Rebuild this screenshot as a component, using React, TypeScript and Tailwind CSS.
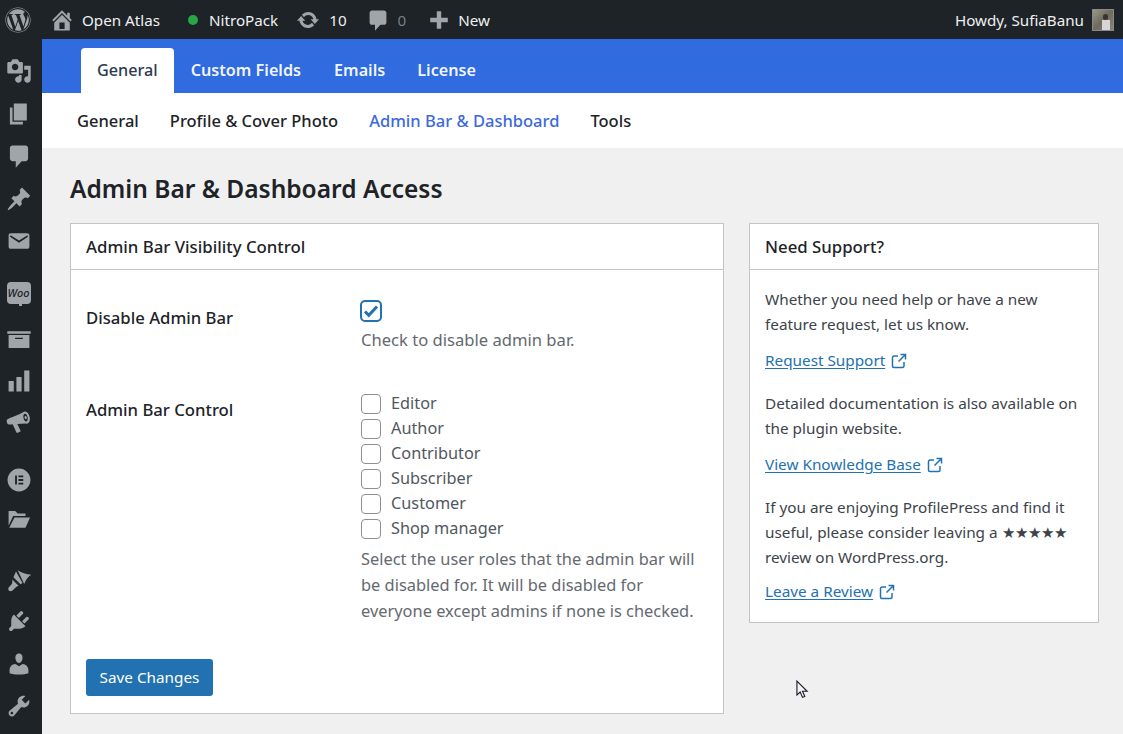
import React from 'react';
import { FaWordpress } from 'react-icons/fa';

const D: React.FC<{ d: string; className?: string }> = ({ d, className }) => (
  <svg viewBox="0 0 20 20" className={className} fill="currentColor" fillRule="evenodd">
    <path d={d} />
  </svg>
);

const paths = {
  home: 'M16 8.5l1.53 1.53-1.06 1.06L10 4.62l-6.47 6.47-1.06-1.06L10 2.5l4 4v-2h2v4zm-6-2.46l6 5.99V18H4v-5.97zM12 17v-5H8v5h4z',
  update: 'M10.2 3.28c3.53 0 6.43 2.61 6.92 6h2.08l-3.5 4-3.5-4h2.32c-.45-1.97-2.21-3.45-4.32-3.45-1.45 0-2.73.71-3.54 1.78L4.95 5.66C6.23 4.2 8.11 3.28 10.2 3.28zm-.4 13.44c-3.52 0-6.43-2.61-6.92-6H.8l3.5-4c1.17 1.33 2.33 2.67 3.5 4H5.48c.45 1.97 2.21 3.45 4.32 3.45 1.45 0 2.73-.71 3.54-1.78l1.71 1.95c-1.28 1.46-3.15 2.38-5.25 2.38z',
  comment: 'M5 2h10c1.1 0 2 .9 2 2v8c0 1.1-.9 2-2 2h-3l-4.5 5v-5H5c-1.1 0-2-.9-2-2V4c0-1.1.9-2 2-2z',
  plus: 'M18 8v4h-6v6H8v-6H2V8h6V2h4v6h6z',
  media: 'M13 11V4c0-.55-.45-1-1-1h-1.67L9 1H5L3.67 3H2c-.55 0-1 .45-1 1v7c0 .55.45 1 1 1h10c.55 0 1-.45 1-1zM7 4.5c1.38 0 2.5 1.12 2.5 2.5S8.38 9.5 7 9.5 4.5 8.38 4.5 7 5.62 4.5 7 4.5zM14 6h5v10.5c0 1.38-1.12 2.5-2.5 2.5S14 17.88 14 16.5s1.12-2.5 2.5-2.5c.17 0 .34.02.5.05V9h-3V6zm-4 8.05V13h2v3.5c0 1.38-1.12 2.5-2.5 2.5S7 17.88 7 16.5 8.12 14 9.5 14c.17 0 .34.02.5.05z',
  page: 'M6 15V2h10v13H6zm-1 1h8v2H3V5h2v11z',
  pin: 'M10.44 3.02l1.82-1.82 6.36 6.35-1.83 1.82c-1.05-.68-2.48-.57-3.41.36l-.75.75c-.92.93-1.04 2.35-.35 3.41l-1.83 1.82-2.41-2.41-2.8 2.79c-.42.42-3.38 2.71-3.8 2.29s1.86-3.39 2.28-3.81l2.79-2.79L4.1 9.36l1.83-1.82c1.05.69 2.48.57 3.4-.36l.75-.75c.93-.92 1.05-2.35.36-3.41z',
  mail: 'M3.87 4h12.25C17.37 4 18 4.59 18 5.79v8.42c0 1.19-.63 1.79-1.88 1.79H3.87C2.62 16 2 15.4 2 14.21V5.79C2 4.59 2.62 4 3.87 4zM10 11.4L16.6 6.9c.3-.2.35-.6.15-.85-.2-.3-.6-.3-.85-.15L10 9.6 4.1 5.9c-.25-.15-.65-.15-.85.15-.2.25-.15.65.15.85z',
  archive: 'M19 4v2H1V4h18zM2 7h16v10H2V7zm11 3V9H7v1h6z',
  chart: 'M18 18V2h-4v16h4zm-6 0V7H8v11h4zm-6 0v-8H2v8h4z',
  megaphone: 'M16 2.2c1.8 0 3 2.2 3 4.8s-1.2 4.8-3 4.8c-.4 0-.8-.1-1.1-.4L8.6 10.4l1.3 5.4c.1.5-.2.9-.7 1l-1.7.4c-.5.1-.9-.2-1-.6L5 10c-1.6-.1-3-.5-3.4-.8C1.2 8.900 1 8 1 7.300s.2-1.500.6-1.800C3 4.700 12 3.600 14.400 2.700c.5-.3 1-.5 1.600-.5zM15.800 4c-.9 0-1.600 1.300-1.600 3s.7 3 1.600 3 1.600-1.300 1.600-3-.7-3-1.600-3zm.1 1.700c.5 0 .9.600.9 1.300s-.4 1.300-.9 1.300-.9-.6-.9-1.300.4-1.300.9-1.300z',
  elementor: 'M10 1.200a8.800 8.800 0 1 0 0 17.600a8.800 8.800 0 0 0 0-17.600zM7 6.500h1.400v7H7zM9.600 6.500h3.700v1.400H9.600zM9.600 9.300h3.700v1.400H9.600zM9.600 12.100h3.700v1.400H9.600z',
  folder: 'M2 3h5l2 2h6v2H5.500L2 14.500V3zm4.500 5H18.500L15 16H2.500L6.500 8z',
  brush: 'M9 2.500c3 1.800 6.500 3.200 10.500 3.500-2.500 1.400-4 3.500-5.500 7zM7.700 3.400l5 8.900-1.500 1-5.500-5.400zM4.800 9.700l4.900 4.800c-.900.200-1.800.700-2.700 1.600l-2 1.900c-.800.800-2.100.800-2.800.100s-.600-1.900.200-2.700l1.800-1.900c.800-.9.700-2.300.600-3.800z',
  plugin: 'M13.110 4.360L9.870 7.600 8 5.730l3.240-3.240c.350-.340 1.050-.200 1.560.320.520.510.660 1.210.310 1.550zm-8 1.770l.910-1.120 9.010 9.010-1.190.840c-.710.710-2.630 1.160-3.820 1.160H6.140L4.900 17.260c-.590.590-1.540.590-2.120 0-.590-.580-.590-1.530 0-2.120l1.240-1.240v-3.880c0-1.130.400-3.190 1.090-3.890zm7.260 3.970l3.240-3.240c.340-.350 1.040-.210 1.550.310.520.510.660 1.210.310 1.550l-3.240 3.250z',
  user: 'M10 9.250c-2.270 0-2.730-3.440-2.730-3.440C7 4.020 7.820 2 9.970 2c2.160 0 2.980 2.020 2.710 3.810 0 0-.410 3.440-2.680 3.440zm0 2.570L12.720 10c2.390 0 4.520 2.330 4.520 4.530v2.490s-3.650 1.130-7.240 1.130c-3.650 0-7.240-1.130-7.240-1.130v-2.490c0-2.250 1.940-4.480 4.470-4.480z',
  tools: 'M16.680 9.770c-1.340 1.340-3.300 1.670-4.950.990l-5.410 6.520c-.990.990-2.590.990-3.580 0s-.990-2.590 0-3.570l6.520-5.420c-.680-1.650-.350-3.610.990-4.950 1.280-1.280 3.120-1.620 4.720-1.060l-2.890 2.890 2.820 2.820 2.860-2.870c.530 1.580.180 3.390-1.080 4.650zM3.810 16.210c.400.390 1.040.390 1.430 0 .400-.400.400-1.040 0-1.430-.390-.400-1.030-.400-1.430 0-.390.390-.390 1.030 0 1.430z',
};

const sideItems: { key: keyof typeof paths | 'woo'; gap: string }[] = [
  { key: 'media', gap: 'mt-0' },
  { key: 'page', gap: 'mt-0' },
  { key: 'comment', gap: 'mt-0' },
  { key: 'pin', gap: 'mt-0' },
  { key: 'mail', gap: 'mt-0' },
  { key: 'woo', gap: 'mt-[9px]' },
  { key: 'archive', gap: 'mt-[4px]' },
  { key: 'chart', gap: '-mt-[1px]' },
  { key: 'megaphone', gap: 'mt-0' },
  { key: 'elementor', gap: 'mt-[14px]' },
  { key: 'folder', gap: '-mt-[2px]' },
  { key: 'brush', gap: 'mt-[17px]' },
  { key: 'plugin', gap: '-mt-[1px]' },
  { key: 'user', gap: 'mt-0' },
  { key: 'tools', gap: 'mt-0' },
];

const Sidebar = () => (
  <div className="w-[42px] shrink-0 bg-[#1d2327] pt-[11px] text-[#a0a5aa]">
    {sideItems.map(({ key, gap }) => (
      <div key={key} className={`h-[42.5px] flex items-center justify-center pr-[5px] ${gap}`}>
        {key === 'woo' ? (
          <div className="relative w-[24px] h-[22px] rounded-[4px] bg-[#a0a5aa] flex items-center justify-center">
            <span className="text-[11px] italic font-medium text-[#1d2327] leading-none">Woo</span>
            <span className="absolute -bottom-[2px] left-[12px] w-[3px] h-[3px] bg-[#a0a5aa]" />
          </div>
        ) : (
          <D d={paths[key]} className={key === 'megaphone' ? 'w-[26px] h-[26px] -rotate-12' : 'w-[26px] h-[26px]'} />
        )}
      </div>
    ))}
  </div>
);

const TopBar = () => (
  <div className="h-[39px] bg-[#1d2327] flex items-center text-[15.2px] text-[#f0f0f1] shrink-0">
    <div className="w-[52px] pl-[5px] shrink-0 text-[#a0a5aa]">
      <FaWordpress className="w-[26px] h-[26px]" />
    </div>
    <D d={paths.home} className="w-[26px] h-[26px] text-[#a0a5aa] -ml-[3px]" />
    <span className="ml-[7px] pt-[2px]">Open Atlas</span>
    <span className="ml-[28px] w-[10px] h-[10px] rounded-full bg-[#28a745]" />
    <span className="ml-[11px] pt-[2px]">NitroPack</span>
    <D d={paths.update} className="ml-[18px] w-[24px] h-[24px] text-[#a0a5aa]" />
    <span className="ml-[9px] pt-[2px]">10</span>
    <D d={paths.comment} className="ml-[19px] w-[24px] h-[24px] text-[#a0a5aa]" />
    <span className="ml-[8px] pt-[2px] text-[#7a7f84]">0</span>
    <D d={paths.plus} className="ml-[22px] w-[22px] h-[22px] text-[#a0a5aa]" />
    <span className="ml-[8px] pt-[2px]">New</span>
    <span className="ml-auto pt-[2px]">Howdy, SufiaBanu</span>
    <div className="ml-[8px] mr-[9px] w-[22px] h-[22px] border border-[#888] bg-[linear-gradient(135deg,#9a9a8a_0%,#6f6a5c_50%,#8c8378_100%)] relative overflow-hidden">
      <span className="absolute left-[10px] top-[4px] w-[5px] h-[6px] rounded-full bg-[#3a3230]" />
      <span className="absolute left-[9px] top-[10px] w-[8px] h-[12px] bg-[#d8d4d8]" />
    </div>
  </div>
);

const ExtLink: React.FC<{ label: string }> = ({ label }) => (
  <p className="flex items-center text-[#2271b1]">
    <a className="underline underline-offset-2">{label}</a>
    <svg viewBox="0 0 16 16" className="ml-[6px] w-[16px] h-[16px]" fill="none" stroke="currentColor" strokeWidth="1.5">
      <path d="M7 3H3a1.500 1.500 0 0 0-1.500 1.500v8.500A1.500 1.500 0 0 0 3 14.500h8.500A1.500 1.500 0 0 0 13 13V9" />
      <path d="M9.500 1.500h5v5M14.500 1.500L7.500 8.500" />
    </svg>
  </p>
);

const roles = ['Editor', 'Author', 'Contributor', 'Subscriber', 'Customer', 'Shop manager'];

export default function App() {
  return (
    <div
      className="w-[1123px] h-[734px] overflow-hidden flex flex-col bg-[#f0f0f1] relative"
      style={{ fontFamily: '"Noto Sans", sans-serif' }}
    >
      <TopBar />
      <div className="flex flex-1 min-h-0">
        <Sidebar />
        <div className="flex-1 min-w-0">
          <div className="h-[54px] bg-[#306ce0] flex items-end pl-[39px] text-[16.2px] font-semibold text-white/95">
            <div className="h-[45px] px-[16px] bg-white rounded-t-[4px] text-[#2c3a4f] font-medium flex items-center">General</div>
            <div className="h-[45px] ml-[17px] flex items-center">Custom Fields</div>
            <div className="h-[45px] ml-[33px] flex items-center">Emails</div>
            <div className="h-[45px] ml-[32px] flex items-center">License</div>
          </div>
          <div className="h-[55px] pt-[2px] bg-white flex items-center pl-[35px] text-[16.5px] font-medium text-[#1d2327] gap-[31px]">
            <span>General</span>
            <span>Profile &amp; Cover Photo</span>
            <span className="text-[#3c69dc]">Admin Bar &amp; Dashboard</span>
            <span>Tools</span>
          </div>
          <div className="pl-[28px] pr-[24px]">
            <h1 className="mt-[23px] h-[36px] leading-[35px] text-[24.5px] font-semibold text-[#1d2327]">Admin Bar &amp; Dashboard Access</h1>
            <div className="mt-[16px] flex items-start gap-[25px]">
              <div className="w-[654px] h-[491px] bg-white border border-[#c3c4c7]">
                <div className="h-[46px] border-b border-[#c3c4c7] pl-[15px] flex items-center text-[16.8px] font-medium text-[#1d2327]">
                  Admin Bar Visibility Control
                </div>
                <div className="px-[15px]">
                  <div className="flex mt-[30px]">
                    <div className="w-[275px] text-[16.7px] font-medium text-[#1d2327] leading-[36px]">Disable Admin Bar</div>
                    <div>
                      <span className="flex items-center justify-center -ml-[1px] w-[22px] h-[22px] border-2 border-[#2271b1] rounded-[5px] text-[#2271b1]">
                        <svg viewBox="0 0 16 16" className="w-[16px] h-[16px]" fill="none" stroke="currentColor" strokeWidth="3">
                          <path d="M2 8.500l3.800 3.800L14 3.500" />
                        </svg>
                      </span>
                      <p className="mt-[5px] text-[16.6px] leading-[26px] text-[#646970]">Check to disable admin bar.</p>
                    </div>
                  </div>
                  <div className="flex mt-[38px]">
                    <div className="w-[275px] text-[16.7px] font-medium text-[#1d2327] leading-[36px] mt-[1px] h-[33px]">Admin Bar Control</div>
                    <div className="w-[345px]">
                      {roles.map((r) => (
                        <div key={r} className="h-[25px] flex items-center text-[16.3px] text-[#50575e]">
                          <span className="w-[20px] h-[20px] border border-[#8c8f94] rounded-[4px] bg-white mr-[10px]" />
                          {r}
                        </div>
                      ))}
                      <p className="mt-[5px] text-[16.4px] leading-[26px] text-[#646970]">
                        Select the user roles that the admin bar will be disabled for. It will be disabled for everyone except admins if none is checked.
                      </p>
                    </div>
                  </div>
                  <button className="mt-[35px] h-[37px] w-[127px] bg-[#2271b1] rounded-[3px] text-white text-[15.3px]">Save Changes</button>
                </div>
              </div>
              <div className="w-[350px] h-[400px] bg-white border border-[#c3c4c7]">
                <div className="h-[46px] border-b border-[#c3c4c7] pl-[15px] flex items-center text-[16.8px] font-medium text-[#1d2327]">
                  Need Support?
                </div>
                <div className="px-[15px] pt-[17px] text-[15.3px] leading-[25px] text-[#3c434a]">
                  <p>Whether you need help or have a new feature request, let us know.</p>
                  <div className="mt-[11px]"><ExtLink label="Request Support" /></div>
                  <p className="mt-[18px]">Detailed documentation is also available on the plugin website.</p>
                  <div className="mt-[11px]"><ExtLink label="View Knowledge Base" /></div>
                  <p className="mt-[18px]">If you are enjoying ProfilePress and find it useful, please consider leaving a ★★★★★ review on WordPress.org.</p>
                  <div className="mt-[9px]"><ExtLink label="Leave a Review" /></div>
                </div>
              </div>
            </div>
          </div>
        </div>
      </div>
      <svg viewBox="0 0 14 20" className="absolute left-[796px] top-[680px] w-[13px] h-[19px]" fill="#f5f5f5" stroke="#1a1a2a" strokeWidth="1.200">
        <path d="M1 1v15l3.500-3.300 2.500 5.800 2.500-1-2.500-5.600h5z" />
      </svg>
    </div>
  );
}
